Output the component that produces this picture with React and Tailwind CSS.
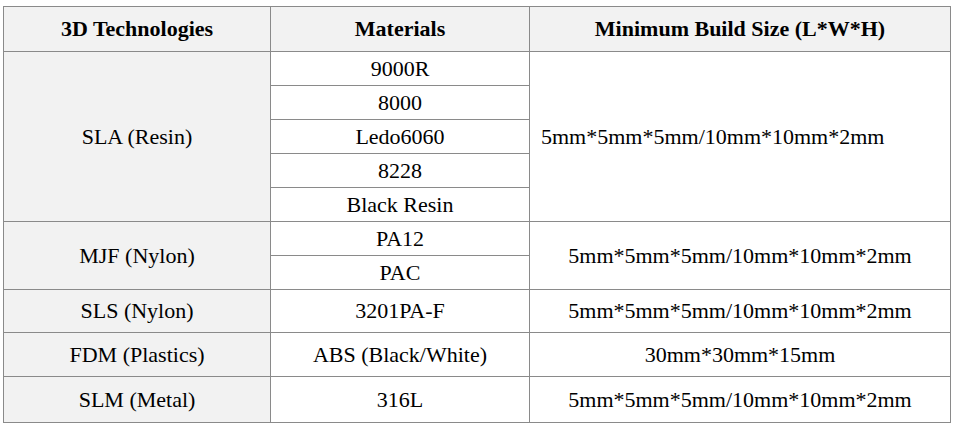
import React from "react";

const td = "border border-[#8a8a8a] text-center align-middle p-0";

export default function App() {
  return (
    <div className="w-[957px] h-[427px] bg-white pt-[6px] pl-[3px]" style={{ fontFamily: '"Liberation Serif", "Times New Roman", serif' }}>
      <table className="border-collapse table-fixed w-[947px] text-[22px] text-black leading-none">
        <colgroup>
          <col className="w-[267px]" />
          <col className="w-[259px]" />
          <col className="w-[421px]" />
        </colgroup>
        <tbody>
          <tr className="h-[45px] bg-[#f2f2f2] font-bold">
            <td className={td}>3D Technologies</td>
            <td className={td}>Materials</td>
            <td className={td}>Minimum Build Size (L*W*H)</td>
          </tr>
          <tr className="h-[34px]">
            <td rowSpan={5} className={`${td} bg-[#f2f2f2]`}>SLA (Resin)</td>
            <td className={td}>9000R</td>
            <td rowSpan={5} className={`${td} text-left pl-[11px]`}>5mm*5mm*5mm/10mm*10mm*2mm</td>
          </tr>
          <tr className="h-[34px]"><td className={td}>8000</td></tr>
          <tr className="h-[34px]"><td className={td}>Ledo6060</td></tr>
          <tr className="h-[34px]"><td className={td}>8228</td></tr>
          <tr className="h-[34px]"><td className={td}>Black Resin</td></tr>
          <tr className="h-[34px]">
            <td rowSpan={2} className={`${td} bg-[#f2f2f2]`}>MJF (Nylon)</td>
            <td className={td}>PA12</td>
            <td rowSpan={2} className={td}>5mm*5mm*5mm/10mm*10mm*2mm</td>
          </tr>
          <tr className="h-[34px]"><td className={td}>PAC</td></tr>
          <tr className="h-[43px]">
            <td className={`${td} bg-[#f2f2f2]`}>SLS (Nylon)</td>
            <td className={td}>3201PA-F</td>
            <td className={td}>5mm*5mm*5mm/10mm*10mm*2mm</td>
          </tr>
          <tr className="h-[44px]">
            <td className={`${td} bg-[#f2f2f2]`}>FDM (Plastics)</td>
            <td className={td}>ABS (Black/White)</td>
            <td className={td}>30mm*30mm*15mm</td>
          </tr>
          <tr className="h-[46px]">
            <td className={`${td} bg-[#f2f2f2]`}>SLM (Metal)</td>
            <td className={td}>316L</td>
            <td className={td}>5mm*5mm*5mm/10mm*10mm*2mm</td>
          </tr>
        </tbody>
      </table>
    </div>
  );
}
